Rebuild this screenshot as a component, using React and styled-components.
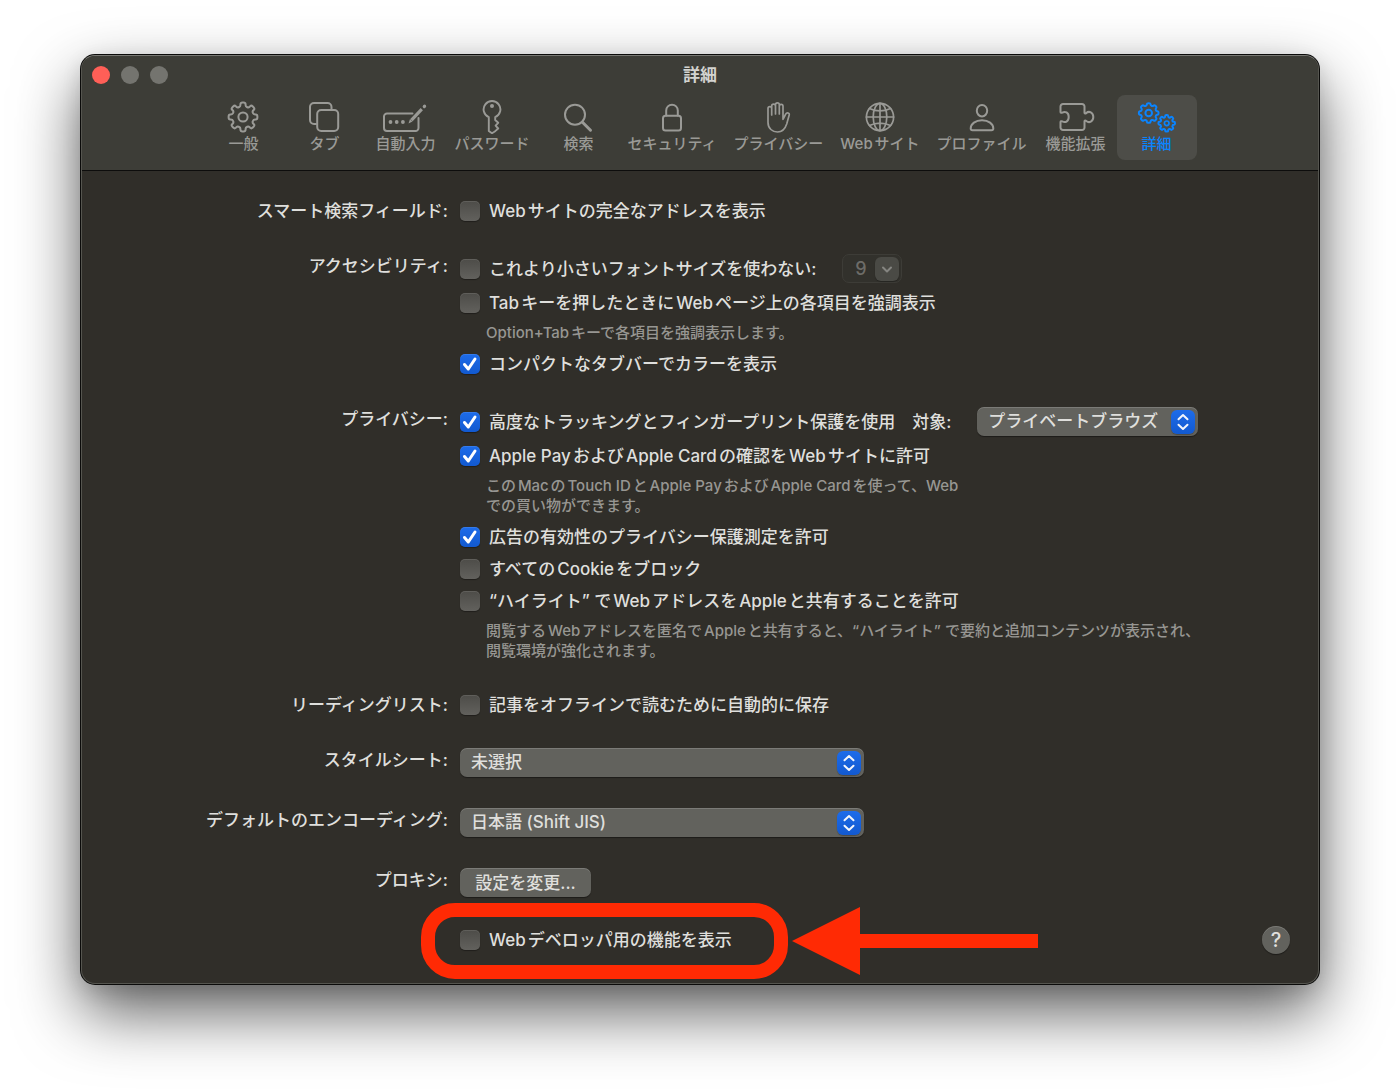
import React, { useId, useState } from "react";
import styled, { createGlobalStyle, css } from "styled-components";

const color = {
  bar: "#3d3d37",
  body: "#302e29",
  text: "#dfdfdc",
  muted: "#9a9a96",
  note: "#979692",
  control: "#62625d",
  accent: "#0a84ff",
  red: "#ff2a04",
};

const GlobalStyle = createGlobalStyle`
  *, *::before, *::after { box-sizing: border-box; }
  body {
    margin: 0;
    background: #fff;
    color: ${color.text};
    font-family: Inter, "Noto Sans CJK JP", sans-serif;
    font-size: 17px;
    font-weight: 500;
    line-height: 24px;
    text-autospace: normal;
  }
  button, select, input { font: inherit; color: inherit; margin: 0; }
`;

const Desktop = styled.div`
  padding: 55px 81px 107px;
`;

const Window = styled.main`
  border: 1px solid #55554f;
  border-top-color: #777772;
  border-radius: 14px;
  overflow: hidden;
  background: ${color.body};
  box-shadow: 0 0 0 1px #0b0b0a, 0 6px 20px rgba(0, 0, 0, 0.12), 0 28px 64px rgba(0, 0, 0, 0.64);
`;

const Header = styled.header`
  background: ${color.bar};
  border-bottom: 1px solid #0d0d0c;
`;

const TitleBar = styled.div`
  display: grid;
  grid-template-columns: 1fr auto 1fr;
  align-items: center;
  height: 37px;
  padding: 0 10px;
`;

const Lights = styled.div`
  display: flex;
  gap: 11px;
`;

const Light = styled.button`
  width: 18px;
  height: 18px;
  padding: 0;
  border: 0;
  border-radius: 50%;
  background: ${(p) => (p.$close ? "#ff5f57" : "#74746f")};
`;

const Title = styled.h1`
  margin: 0;
  font-size: 17px;
  font-weight: 700;
  color: #d3d3cf;
`;

const Toolbar = styled.nav`
  display: flex;
  justify-content: center;
  gap: 1px;
  padding: 2px 0 10px;
`;

const Tab = styled.button`
  display: flex;
  flex-direction: column;
  align-items: center;
  min-width: 80px;
  height: 65px;
  padding: 5px 8px 6px;
  border: 0;
  border-radius: 8px;
  background: ${(p) => (p.$active ? "#4d4d48" : "transparent")};
  color: ${(p) => (p.$active ? color.accent : color.muted)};
  font-size: 15px;
  line-height: 20px;
  white-space: nowrap;
`;

const Glyph = styled.svg`
  display: block;
  width: 48px;
  height: 34px;
  fill: none;
  stroke: currentColor;
  stroke-width: 2;
  stroke-linecap: round;
  stroke-linejoin: round;
`;

const Form = styled.form`
  display: flex;
  flex-direction: column;
  gap: 31px;
  padding: 28px 28px 31px 0;
`;

const Group = styled.div`
  display: grid;
  grid-template-columns: 366px minmax(0, 1fr);
  column-gap: 12px;
`;

const GroupLabel = styled.span`
  grid-column: 1;
  text-align: right;
`;

const Fields = styled.div`
  grid-column: 2;
  display: flex;
  flex-direction: column;
  align-items: flex-start;
  gap: 8px;
`;

const Line = styled.div`
  display: flex;
  align-items: center;
  gap: 26px;
`;

const Option = styled.label`
  display: flex;
  align-items: center;
  gap: 9px;
`;

const Stack = styled.span`
  display: inline-grid;
  align-items: center;
  & > * { grid-area: 1 / 1; }
`;

const Box = styled.input`
  appearance: none;
  width: 20px;
  height: 20px;
  border-radius: 5px;
  background: linear-gradient(#4d4c48, #62615d);
  box-shadow: 0 1px 1px rgba(0, 0, 0, 0.35), inset 0 1px 0 rgba(255, 255, 255, 0.1);
  &:checked { background: linear-gradient(#1d6cea, #1259cf); }
  & + svg { visibility: hidden; }
  &:checked + svg { visibility: visible; }
`;

const Tick = styled.svg`
  width: 20px;
  height: 20px;
  fill: none;
  stroke: #fff;
  stroke-width: 3;
  stroke-linecap: round;
  stroke-linejoin: round;
  pointer-events: none;
`;

const Note = styled.p`
  margin: 0 0 1px;
  padding-left: 26px;
  font-size: 15px;
  line-height: 20px;
  color: ${color.note};
`;

const raised = css`
  height: 29px;
  border: 0;
  border-radius: 7px;
  background: ${color.control};
  box-shadow: 0 1px 1px rgba(0, 0, 0, 0.4), inset 0 1px 0 rgba(255, 255, 255, 0.16);
`;

const Select = styled.select`
  appearance: none;
  ${raised}
  width: ${(p) => p.$width}px;
  padding: 0 34px 2px 11px;
`;

const SmallSelect = styled.select`
  appearance: none;
  width: 60px;
  height: 29px;
  padding: 0 28px 0 12px;
  border: 1px solid #3d3c37;
  border-radius: 7px;
  background: #32312c;
  font-size: 18px;
  &:disabled { color: #6d6c68; opacity: 1; }
`;

const Stepper = styled.svg`
  justify-self: end;
  width: 24px;
  height: 24px;
  margin-right: 3px;
  border-radius: 6px;
  background: ${(p) => (p.$dim ? "#4a4a45" : "linear-gradient(#1d6cea, #1259cf)")};
  box-shadow: 0 1px 1px rgba(0, 0, 0, 0.25);
  fill: none;
  stroke: ${(p) => (p.$dim ? "#858581" : "#f2f5fb")};
  stroke-width: 2;
  stroke-linecap: round;
  stroke-linejoin: round;
  pointer-events: none;
`;

const PushButton = styled.button`
  ${raised}
  width: 131px;
  padding: 0;
`;

const LastLine = styled.div`
  grid-column: 2;
  display: flex;
  align-items: center;
  justify-content: space-between;
`;

const HelpButton = styled.button`
  width: 28px;
  height: 28px;
  margin: -2px 0;
  padding: 0;
  border: 0;
  border-radius: 50%;
  background: ${color.control};
  box-shadow: 0 1px 1px rgba(0, 0, 0, 0.4), inset 0 1px 0 rgba(255, 255, 255, 0.16);
  font-size: 20px;
`;

const Marked = styled.div`
  position: relative;
`;

const Ring = styled.div`
  position: absolute;
  left: -39px;
  top: -25px;
  width: 367px;
  height: 76px;
  border: 14px solid ${color.red};
  border-radius: 34px;
  pointer-events: none;
`;

const Arrow = styled.svg`
  position: absolute;
  left: 332px;
  top: -21px;
  width: 246px;
  height: 68px;
  fill: ${color.red};
  pointer-events: none;
`;

/* Closed outline of a cog with rounded teeth. */
function cogPath(cx, cy, outer, inner) {
  const pts = [];
  for (let i = 0; i < 8; i++) {
    const a = i * 45 - 90;
    [[-14, inner], [-10, outer], [10, outer], [14, inner]].forEach(([d, r]) => {
      const t = ((a + d) * Math.PI) / 180;
      pts.push([cx + r * Math.cos(t), cy + r * Math.sin(t)]);
    });
  }
  const mix = (p, q, t) => [p[0] + (q[0] - p[0]) * t, p[1] + (q[1] - p[1]) * t];
  const f = (p) => p.map((n) => n.toFixed(2)).join(" ");
  return (
    pts
      .map((p, i) => {
        const before = mix(p, pts[(i + pts.length - 1) % pts.length], 0.4);
        const after = mix(p, pts[(i + 1) % pts.length], 0.4);
        return `${i ? "L" : "M"}${f(before)} Q${f(p)} ${f(after)}`;
      })
      .join(" ") + "Z"
  );
}

const icons = {
  general: (
    <>
      <path d={cogPath(0, 0, 14.6, 10.8)} />
      <circle r="4.6" />
    </>
  ),
  tabs: (
    <>
      <path d="M7.5-8v-2a4 4 0 0 0-4-4H-10a4 4 0 0 0-4 4V3a4 4 0 0 0 4 4h2" />
      <rect x="-6.8" y="-7" width="21" height="21" rx="4" />
    </>
  ),
  autofill: (
    <>
      <path d="M7.5-3.5H-18a3 3 0 0 0-3 3V11a3 3 0 0 0 3 3H10.500a3 3 0 0 0 3-3V1" />
      <path d="M3.500 6.500l1.500-4.500 2.500 2.400z" fill="currentColor" stroke="none" />
      <path d="M6.500 3.200L16.800-7.800" strokeWidth="3.200" strokeLinecap="butt" />
      <path d="M19.300-10.500l.3-.3" strokeWidth="3.200" />
      <g fill="currentColor" stroke="none">
        <circle cx="-14.500" cy="5" r="1.900" />
        <circle cx="-8.300" cy="5" r="1.900" />
        <circle cx="-2.100" cy="5" r="1.900" />
      </g>
    </>
  ),
  key: (
    <>
      <path d="M-3.200.2A8.400 8.400 0 1 1 3.200.2V3l3 2.800-2.600 2.800 2.600 2.900-3 2.600V14.300L0 16.200l-3.200-2.300z" strokeWidth="1.900" />
      <circle cy="-11" r="2" fill="currentColor" stroke="none" />
    </>
  ),
  search: (
    <>
      <circle cx="-3" cy="-2.300" r="10" />
      <path d="M4.500 5.200l8 8" strokeWidth="3" />
    </>
  ),
  lock: (
    <>
      <rect x="-9" y="-1.200" width="18" height="14.600" rx="2.500" />
      <path d="M-5.800-1.500V-6.500a5.800 5.800 0 0 1 11.600 0v5" />
    </>
  ),
  hand: (
    <>
      <path d="M-10 2V-8.500a1.800 1.800 0 0 1 3.700 0V-2V-11a1.900 1.900 0 0 1 3.800 0V-3V-12.300a1.900 1.900 0 0 1 3.800 0V-3V-10.800a1.800 1.800 0 0 1 3.700 0V2.300c1.200-1.800 1.900-3.600 2.700-5.200 1.200-2.200 4.200-1.200 3.500 1L8.700 7C7 12.300 4.500 15-.5 15S-10 11.500-10 5.500z" strokeWidth="1.700" />
    </>
  ),
  globe: (
    <g strokeWidth="1.700">
      <circle r="13.600" />
      <ellipse rx="6.800" ry="13.600" />
      <path d="M0-13.600V13.600M-13.600 0H13.600M-10.600-8.500Q0-3.600 10.600-8.500M-10.600 8.500Q0 3.600 10.600 8.500" />
    </g>
  ),
  person: (
    <>
      <ellipse cy="-6.300" rx="5.200" ry="5.700" />
      <path d="M-9.500 13.300a1.800 1.800 0 0 1-1.800-1.800C-11.300 6.800-6.500 3.300 0 3.300s11.300 3.500 11.300 8.200a1.800 1.800 0 0 1-1.800 1.800z" />
    </>
  ),
  puzzle: (
    <path d="M-15.500-5V-10.500a2.500 2.500 0 0 1 2.500-2.500H6a2.500 2.500 0 0 1 2.500 2.500V-4.200c0 1 1 1 1.800.2 2.800-2.400 7-.6 7 4s-4.200 6.400-7 4c-.8-.8-1.800-.8-1.800.2V10.500A2.500 2.500 0 0 1 6 13H-13a2.500 2.500 0 0 1-2.500-2.500V5c0-1 1-1 1.800-.6 2.800 1.600 6.400.2 6.400-4.400s-3.600-6-6.400-4.400c-.8.400-1.800.4-1.800-.6z" />
  ),
  advanced: (
    <>
      <path d={cogPath(-8.3, -4, 10, 7.800)} />
      <circle cx="-8.300" cy="-4" r="3.300" />
      <path d={cogPath(9.700, 6.300, 8.400, 6.300)} />
      <circle cx="9.700" cy="6.300" r="2.300" strokeWidth="1.700" />
    </>
  ),
};

const tabs = [
  ["general", "一般"],
  ["tabs", "タブ"],
  ["autofill", "自動入力"],
  ["key", "パスワード"],
  ["search", "検索"],
  ["lock", "セキュリティ"],
  ["hand", "プライバシー"],
  ["globe", "Webサイト"],
  ["person", "プロファイル"],
  ["puzzle", "機能拡張"],
  ["advanced", "詳細"],
];

function Check({ checked = false, children }) {
  const [on, setOn] = useState(checked);
  return (
    <Option>
      <Stack>
        <Box type="checkbox" checked={on} onChange={(e) => setOn(e.target.checked)} />
        <Tick viewBox="0 0 20 20" aria-hidden="true">
          <path d="M4.500 10.500l3.800 4.500L15 5" />
        </Tick>
      </Stack>
      {children}
    </Option>
  );
}

function Popup({ id, label, width, options }) {
  return (
    <Stack>
      <Select id={id} aria-label={label} $width={width}>
        {options.map((o) => (
          <option key={o}>{o}</option>
        ))}
      </Select>
      <Stepper viewBox="0 0 24 24" aria-hidden="true">
        <path d="M7.500 9.300l4.500-4.300 4.500 4.300M7.500 14.700l4.500 4.300 4.500-4.300" />
      </Stepper>
    </Stack>
  );
}

function Section({ label, labelFor, children }) {
  return (
    <Group role="group" aria-label={label}>
      <GroupLabel as={labelFor ? "label" : "span"} htmlFor={labelFor}>
        {label}:
      </GroupLabel>
      <Fields>{children}</Fields>
    </Group>
  );
}

export default function App() {
  const [active, setActive] = useState("advanced");
  const styleId = useId();
  const encodingId = useId();
  const proxyId = useId();
  return (
    <>
      <GlobalStyle />
      <Desktop lang="ja">
        <Window>
          <Header>
            <TitleBar>
              <Lights>
                <Light type="button" $close aria-label="閉じる" />
                <Light type="button" aria-label="しまう" />
                <Light type="button" aria-label="拡大" />
              </Lights>
              <Title>詳細</Title>
            </TitleBar>
            <Toolbar>
              {tabs.map(([key, name]) => (
                <Tab key={key} type="button" $active={key === active} onClick={() => setActive(key)}>
                  <Glyph viewBox="-24 -17 48 34" aria-hidden="true">
                    {icons[key]}
                  </Glyph>
                  {name}
                </Tab>
              ))}
            </Toolbar>
          </Header>

          <Form onSubmit={(e) => e.preventDefault()}>
            <Section label="スマート検索フィールド">
              <Check>Webサイトの完全なアドレスを表示</Check>
            </Section>

            <Section label="アクセシビリティ">
              <Line>
                <Check>これより小さいフォントサイズを使わない:</Check>
                <Stack>
                  <SmallSelect disabled aria-label="フォントサイズ">
                    <option>9</option>
                  </SmallSelect>
                  <Stepper $dim viewBox="0 0 24 24" aria-hidden="true">
                    <path d="M8 10.500l4 4 4-4" />
                  </Stepper>
                </Stack>
              </Line>
              <Check>Tabキーを押したときにWebページ上の各項目を強調表示</Check>
              <Note>Option+Tabキーで各項目を強調表示します。</Note>
              <Check checked>コンパクトなタブバーでカラーを表示</Check>
            </Section>

            <Section label="プライバシー">
              <Line>
                <Check checked>高度なトラッキングとフィンガープリント保護を使用　対象:</Check>
                <Popup label="対象" width={221} options={["プライベートブラウズ", "すべてのブラウズ"]} />
              </Line>
              <Check checked>Apple PayおよびApple Cardの確認をWebサイトに許可</Check>
              <Note>
                このMacのTouch IDとApple PayおよびApple Cardを使って、Web
                <br />
                での買い物ができます。
              </Note>
              <Check checked>広告の有効性のプライバシー保護測定を許可</Check>
              <Check>すべてのCookieをブロック</Check>
              <Check>“ハイライト” でWebアドレスをAppleと共有することを許可</Check>
              <Note>
                閲覧するWebアドレスを匿名でAppleと共有すると、“ハイライト” で要約と追加コンテンツが表示され、
                <br />
                閲覧環境が強化されます。
              </Note>
            </Section>

            <Section label="リーディングリスト">
              <Check>記事をオフラインで読むために自動的に保存</Check>
            </Section>

            <Section label="スタイルシート" labelFor={styleId}>
              <Popup id={styleId} width={404} options={["未選択", "その他..."]} />
            </Section>

            <Section label="デフォルトのエンコーディング" labelFor={encodingId}>
              <Popup id={encodingId} width={404} options={["日本語 (Shift JIS)", "Unicode (UTF-8)"]} />
            </Section>

            <Section label="プロキシ" labelFor={proxyId}>
              <PushButton id={proxyId} type="button">設定を変更...</PushButton>
            </Section>

            <Group>
              <LastLine>
                <Marked>
                  <Check>Webデベロッパ用の機能を表示</Check>
                  <Ring />
                  <Arrow viewBox="0 0 246 68" aria-hidden="true">
                    <path d="M0 34L68 0V27H246V41H68V68z" />
                  </Arrow>
                </Marked>
                <HelpButton type="button" aria-label="ヘルプ">?</HelpButton>
              </LastLine>
            </Group>
          </Form>
        </Window>
      </Desktop>
    </>
  );
}
